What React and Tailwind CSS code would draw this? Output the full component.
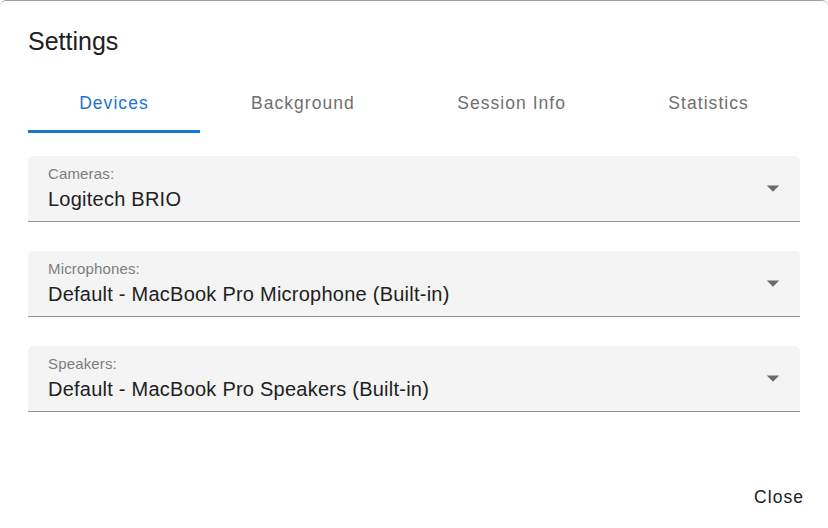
import React from "react";

const font = { fontFamily: '"Liberation Sans", Arial, Helvetica, sans-serif' };

function Arrow() {
  return (
    <svg width="30" height="30" viewBox="0 0 24 24" className="shrink-0">
      <path d="M7 10l5 5 5-5z" fill="#6b6b6b" />
    </svg>
  );
}

function Select({ label, value }) {
  return (
    <div className="flex items-center justify-between bg-[#f4f4f4] rounded-t-[5px] border-b border-[#949494] pl-5 pr-3 pt-[9px] pb-[10px]">
      <div className="flex flex-col">
        <span className="text-[15px] leading-[18px] tracking-[0.01em] text-[#7d7d7d]">{label}</span>
        <span className="mt-[4px] text-[20px] leading-[24px] tracking-[0.012em] text-[#212121]">{value}</span>
      </div>
      <Arrow />
    </div>
  );
}

export default function App() {
  const tabs = ["Devices", "Background", "Session Info", "Statistics"];
  return (
    <div
      style={font}
      className="w-[828px] h-[528px] bg-white border-t border-[#a3a3a3] rounded-t-[6px] flex flex-col overflow-hidden"
    >
      <div className="px-7 pt-[25px]">
        <h1 className="text-[25px] leading-[30px] text-[#212121]">Settings</h1>
      </div>
      <div className="px-7 mt-[17px] flex h-[60px]">
        {tabs.map((t, i) => (
          <div
            key={t}
            className={
              "flex-auto flex flex-col items-center justify-center relative px-5 text-[17.5px] tracking-[0.06em] " +
              (i === 0 ? "text-[#1976d2]" : "text-[#6f6f6f]")
            }
          >
            <span>{t}</span>
            {i === 0 && (
              <div className="absolute left-0 right-0 bottom-0 h-[3px] bg-[#1976d2]" />
            )}
          </div>
        ))}
      </div>
      <div className="px-7 mt-[23px] flex flex-col gap-[29px]">
        <Select label="Cameras:" value="Logitech BRIO" />
        <Select label="Microphones:" value="Default - MacBook Pro Microphone (Built-in)" />
        <Select label="Speakers:" value="Default - MacBook Pro Speakers (Built-in)" />
      </div>
      <div className="mt-auto flex justify-end pr-6 pb-[19px]">
        <button className="text-[17.5px] leading-[24px] tracking-[0.06em] text-[#212121]">Close</button>
      </div>
    </div>
  );
}
